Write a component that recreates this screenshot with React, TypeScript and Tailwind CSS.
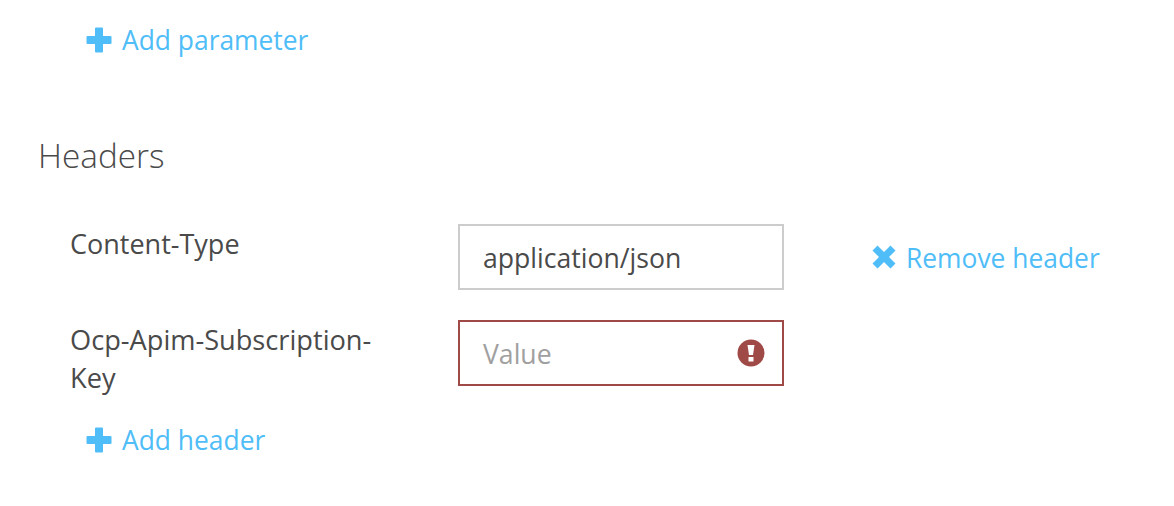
const PlusIcon = () => (
  <svg width="26" height="26" viewBox="0 0 26 26" className="shrink-0">
    <path d="M10 0.500h6a1 1 0 0 1 1 1V9h7.500a1 1 0 0 1 1 1v6a1 1 0 0 1-1 1H17v7.500a1 1 0 0 1-1 1h-6a1 1 0 0 1-1-1V17H1.500a1 1 0 0 1-1-1v-6a1 1 0 0 1 1-1H9V1.500a1 1 0 0 1 1-1z" fill="#4fbdf7" />
  </svg>
);

const CrossIcon = () => (
  <svg width="24" height="24" viewBox="0 0 24 24" className="shrink-0">
    <path d="M5.500 0.500L12 7l6.500-6.500 5 5L17 12l6.500 6.500-5 5L12 17l-6.500 6.500-5-5L7 12 0.500 5.500z" fill="#4fbdf7" />
  </svg>
);

const AlertIcon = () => (
  <svg width="28" height="28" viewBox="0 0 28 28">
    <circle cx="14" cy="14" r="13.500" fill="#a04a48" />
    <path d="M10.500 6h7l-1.500 10h-4z" fill="#fff" />
    <rect x="11.500" y="18" width="5" height="4.500" fill="#fff" />
  </svg>
);

function ActionLink({ label }: { label: string }) {
  return (
    <a className="flex items-center gap-[10px] text-[26.400px] leading-[38px] text-[#4fbdf7]">
      <PlusIcon />
      {label}
    </a>
  );
}

export default function App() {
  return (
    <div className="h-[506px] w-[1174px] overflow-hidden bg-white pl-[39px] pt-[21px] font-['Open_Sans',sans-serif] text-[#4a4a4a]">
      <div className="pl-[47px]">
        <ActionLink label="Add parameter" />
      </div>

      <h2 className="mt-[72px] -ml-px text-[33.300px] font-light leading-[48px]">Headers</h2>

      <div className="mt-[45px] pl-[31px]">
        <div className="flex items-start">
          <div className="w-[388px] pt-px text-[27px] leading-[38px]">Content-Type</div>
          <div className="flex h-[66px] w-[326px] items-center border-2 border-[#cccccc] pl-[23px] pt-[3px] text-[26.600px]">
            application/json
          </div>
          <a className="ml-[88px] flex h-[66px] items-center gap-[10px] text-[26.400px] text-[#4fbdf7]">
            <CrossIcon />
            <span className="pt-[4px]">Remove header</span>
          </a>
        </div>

        <div className="mt-[30px] flex items-start">
          <div className="w-[388px] pr-[70px] pt-px text-[27.200px] leading-[38px]">
            Ocp-Apim-Subscription-Key
          </div>
          <div className="flex h-[66px] w-[326px] items-center justify-between border-2 border-[#a04a48] pl-[23px] pr-[17px] text-[26.600px] text-[#a0a0a0]">
            <span className="pt-[4px]">Value</span>
            <AlertIcon />
          </div>
        </div>

        <div className="mt-[24px] pl-[16px]">
          <ActionLink label="Add header" />
        </div>
      </div>
    </div>
  );
}
